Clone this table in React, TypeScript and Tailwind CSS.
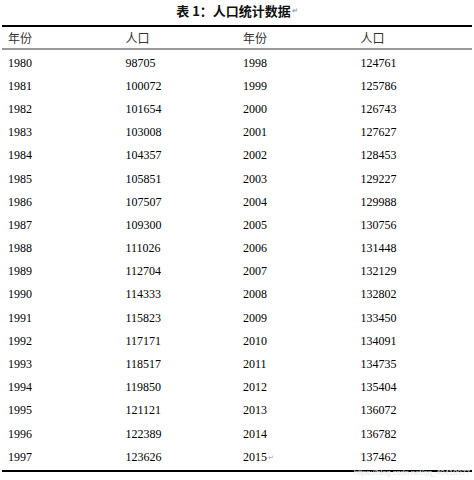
const ROWS: [string, string, string, string][] = [
  ['1980', '98705', '1998', '124761'],
  ['1981', '100072', '1999', '125786'],
  ['1982', '101654', '2000', '126743'],
  ['1983', '103008', '2001', '127627'],
  ['1984', '104357', '2002', '128453'],
  ['1985', '105851', '2003', '129227'],
  ['1986', '107507', '2004', '129988'],
  ['1987', '109300', '2005', '130756'],
  ['1988', '111026', '2006', '131448'],
  ['1989', '112704', '2007', '132129'],
  ['1990', '114333', '2008', '132802'],
  ['1991', '115823', '2009', '133450'],
  ['1992', '117171', '2010', '134091'],
  ['1993', '118517', '2011', '134735'],
  ['1994', '119850', '2012', '135404'],
  ['1995', '121121', '2013', '136072'],
  ['1996', '122389', '2014', '136782'],
  ['1997', '123626', '2015', '137462'],
];

const Mark = () => <span className="ml-[1px] text-[7px] text-gray-400 align-middle">↵</span>;

export default function App() {
  return (
    <div className="w-[474px] h-[480px] bg-white px-[2px] relative font-['Liberation_Serif','Noto_Sans_CJK_SC',serif] text-black">
      {/* 标题 */}
      <div className="h-[25px] flex items-center justify-center pb-[4px] text-[13px] font-bold font-['Noto_Sans_CJK_SC',sans-serif] text-[#111]">
        表 1：人口统计数据<Mark />
      </div>

      {/* 表格 */}
      <div className="border-t-2 border-black">
        <div className="grid grid-cols-4 h-[23px] items-center border-b-2 border-[#9a9a9a] text-[12px] text-[#333] font-['Noto_Sans_CJK_SC',sans-serif]">
          <div className="pl-[6px]">年份</div>
          <div className="pl-[6px]">人口</div>
          <div className="pl-[6px]">年份</div>
          <div className="pl-[6px]">人口</div>
        </div>
        <div className="border-b-2 border-black pb-[3px]">
          {ROWS.map((r) => (
            <div key={r[0]} className="grid grid-cols-4 h-[23.2px] items-center text-[12px] pt-[2px]">
              <div className="pl-[6px]">{r[0]}</div>
              <div className="pl-[6px]">{r[1]}</div>
              <div className="pl-[6px]">
                {r[2]}
                {r[2] === '2015' && <Mark />}
              </div>
              <div className="pl-[6px]">{r[3]}</div>
            </div>
          ))}
        </div>
      </div>

      {/* 水印 */}
      <div className="absolute right-[4px] top-[467px] text-[8px] text-gray-200 font-['Liberation_Sans',sans-serif] tracking-tight">
        https://blog.csdn.net/qq_40418977
      </div>
    </div>
  );
}
